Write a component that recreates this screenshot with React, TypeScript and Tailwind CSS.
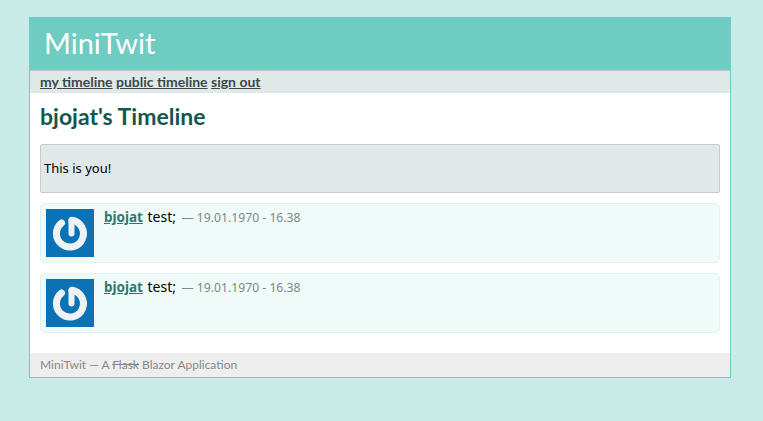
function Avatar() {
  return (
    <svg viewBox="0 0 48 48" className="w-12 h-12 shrink-0 bg-[#0b72b5]">
      <defs>
        <filter id="soft" x="-20%" y="-20%" width="140%" height="140%">
          <feGaussianBlur stdDeviation="0.7" />
        </filter>
      </defs>
      <g filter="url(#soft)" fill="none" strokeLinecap="round" stroke="#eef2f5">
        <path d="M15.5 14 A13.5 13.5 0 1 0 26 11.2" strokeWidth="7" />
        <path d="M25.5 11.5 V24.5" strokeWidth="6" />
      </g>
    </svg>
  );
}

function Message() {
  return (
    <div className="flex h-[60px] p-[5px] rounded-[5px] border border-[#dcf3ef] bg-[#f0faf8]">
      <Avatar />
      <p className='ml-[10px] -mt-px font-["Noto_Sans",sans-serif] text-[13.5px] leading-[18px] text-black'>
        <a className="font-bold underline text-[#2b7a72]">bjojat</a>{' '}
        <span className="ml-px text-[14px]">test;</span>{' '}
        <span className="ml-[2px] text-[#7c8a88] text-[12.2px]">— 19.01.1970 - 16.38</span>
      </p>
    </div>
  );
}

export default function App() {
  return (
    <div className='min-h-screen bg-[#c9ebe8] pt-[17px] pl-[29px] font-["Lato",sans-serif]'>
      <div className="w-[702px] border-r border-b border-l border-[#6fccc3] bg-white">
        <div className="h-[53px] -mx-px bg-[#6fccc3] flex items-center pl-[15px] pb-[2px]">
          <h1 className="text-[29px] leading-none text-white">MiniTwit</h1>
        </div>
        <nav className="h-[23px] bg-[#e1e9e8] border-t border-[#c4c9c8] pl-[10px] text-[14px] leading-[22px] font-bold text-[#3a4a48]">
          <a className="underline">my timeline</a> <a className="underline">public timeline</a>{' '}
          <a className="underline">sign out</a>
        </nav>
        <div className="px-[10px]">
          <h2 className="mt-[9px] text-[23px] leading-[28px] font-bold text-[#14574f]">
            bjojat's Timeline
          </h2>
          <div className='mt-[14px] h-[49px] flex items-center pl-[3px] rounded-[2px] border border-[#c8cccb] bg-[#e1e9e8] font-["Noto_Sans",sans-serif] text-[13px] text-black'>
            This is you!
          </div>
          <div className="mt-[10px] flex flex-col gap-[10px]">
            <Message />
            <Message />
          </div>
        </div>
        <footer className="mt-[20px] h-[24px] bg-[#eeeeee] pl-[10px] text-[12px] leading-[24px] text-[#888888]">
          MiniTwit — A <s>Flask</s> Blazor Application
        </footer>
      </div>
    </div>
  );
}
